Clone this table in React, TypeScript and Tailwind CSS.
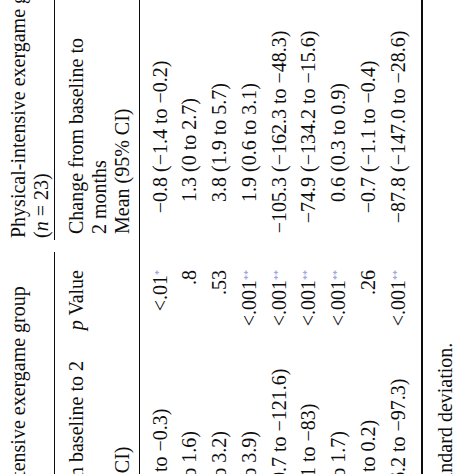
const LEFT_ROWS = [
  ['−0.8', '(−1.3 to −0.3)', '<.01', '*'],
  ['0.9', '(0.2 to 1.6)', '.8', ''],
  ['1.8', '(0.4 to 3.2)', '.53', ''],
  ['2.4', '(0.9 to 3.9)', '<.001', '**'],
  ['−171.2', '(−220.7 to −121.6)', '<.001', '**'],
  ['−89.6', '(−96.1 to −83)', '<.001', '**'],
  ['1.0', '(0.3 to 1.7)', '<.001', '**'],
  ['−0.4', '(−1.0 to 0.2)', '.26', ''],
  ['−146.8', '(−196.2 to −97.3)', '<.001', '**'],
];

const RIGHT_ROWS = [
  ['−0.8', '(−1.4 to −0.2)'],
  ['1.3', '(0 to 2.7)'],
  ['3.8', '(1.9 to 5.7)'],
  ['1.9', '(0.6 to 3.1)'],
  ['−105.3', '(−162.3 to −48.3)'],
  ['−74.9', '(−134.2 to −15.6)'],
  ['0.6', '(0.3 to 0.9)'],
  ['−0.7', '(−1.1 to −0.4)'],
  ['−87.8', '(−147.0 to −28.6)'],
];

export default function App() {
  return (
    <div className="w-[474px] h-[474px] overflow-hidden bg-white">
      {/* the table is printed sideways: rotate the whole sheet */}
      <div className="w-[474px] h-[474px] -rotate-90 overflow-hidden">
        <div className="ml-[-104px] w-[760px] font-['Liberation_Serif',serif] text-[20px] text-[#0d0d0d]">
          <div className="flex pt-[7px] leading-[23px]">
            <div className="w-[326px] shrink-0 border-b border-[#0d0d0d] pb-[1px] whitespace-nowrap">
              Cognitive-intensive exergame group
              <br />
              (<i>n</i> = 24)
            </div>
            <div className="ml-[12px] flex-1 border-b border-[#0d0d0d] pl-[2px] pb-[1px] whitespace-nowrap">
              Physical-intensive exergame group
              <br />
              (<i>n</i> = 23)
            </div>
          </div>

          <div className="flex border-b border-[#0d0d0d] pt-[10px] pb-[5px] leading-[23px] whitespace-nowrap">
            <div className="w-[220px] shrink-0 pl-[6px]">
              Change from baseline to 2
              <br />
              months
              <br />
              Mean (95% CI)
            </div>
            <div className="w-[108px] shrink-0 pr-[20px] text-right">
              <i>p</i> Value
            </div>
            <div className="pl-[16px]">
              Change from baseline to
              <br />
              2 months
              <br />
              Mean (95% CI)
            </div>
          </div>

          <div className="pt-[5.5px] pb-[8px] border-b-2 border-[#0d0d0d] leading-[29.75px] whitespace-nowrap">
            {LEFT_ROWS.map((r, i) => (
              <div key={i} className="flex">
                <div className="w-[220px] shrink-0 pl-[6px]">
                  <span className="inline-block w-[47px] text-right">{r[0]}</span> {r[1]}
                </div>
                <div className="w-[108px] shrink-0 pr-[20px] text-right">
                  {r[2]}
                  {r[3] && <sup className="text-[10px] text-[#8f98d6]">{r[3]}</sup>}
                </div>
                <div className="pl-[16px]">
                  <span className="inline-block w-[57px] text-right">{RIGHT_ROWS[i][0]}</span> {RIGHT_ROWS[i][1]}
                </div>
              </div>
            ))}
          </div>

          <p className="pt-[11px] pl-[47px] leading-[23px] whitespace-nowrap">SD: standard deviation.</p>
        </div>
      </div>
    </div>
  );
}
